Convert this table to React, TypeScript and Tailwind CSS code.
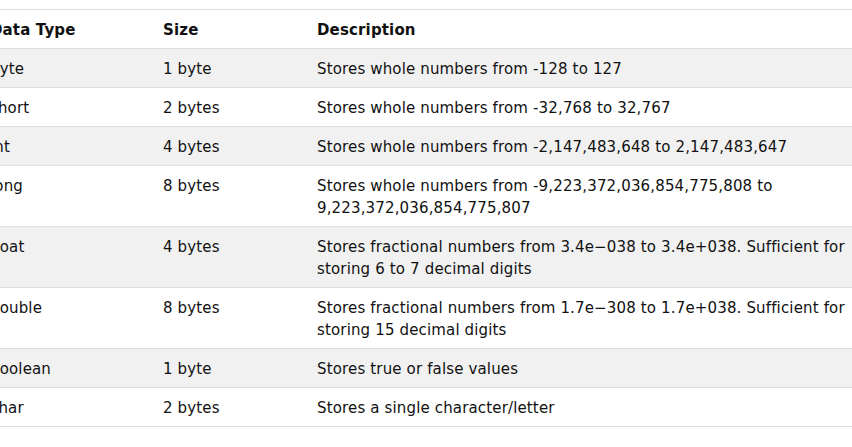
import React from "react";

// Data type rows, straight from the reference
const rows: { type: string; size: string; desc: string }[] = [
  { type: "byte", size: "1 byte", desc: "Stores whole numbers from -128 to 127" },
  { type: "short", size: "2 bytes", desc: "Stores whole numbers from -32,768 to 32,767" },
  { type: "int", size: "4 bytes", desc: "Stores whole numbers from -2,147,483,648 to 2,147,483,647" },
  {
    type: "long",
    size: "8 bytes",
    desc: "Stores whole numbers from -9,223,372,036,854,775,808 to 9,223,372,036,854,775,807",
  },
  {
    type: "float",
    size: "4 bytes",
    desc: "Stores fractional numbers from 3.4e\u2212038 to 3.4e+038. Sufficient for storing 6 to 7 decimal digits",
  },
  {
    type: "double",
    size: "8 bytes",
    desc: "Stores fractional numbers from 1.7e\u2212308 to 1.7e+038. Sufficient for storing 15 decimal digits",
  },
  { type: "boolean", size: "1 byte", desc: "Stores true or false values" },
  { type: "char", size: "2 bytes", desc: "Stores a single character/letter" },
];

const App: React.FC = () => {
  return (
    <div className="w-[852px] h-[447px] overflow-hidden bg-white font-['Verdana','DejaVu_Sans',sans-serif] text-[15px] leading-[22px] tracking-[0.15px] text-[#111111]">
      <table className="mt-[9px] ml-[-18px] border-collapse table-fixed w-[900px]">
        <colgroup>
          <col className="w-[173px]" />
          <col className="w-[154px]" />
          <col className="w-[573px]" />
        </colgroup>
        <thead>
          <tr className="border-y border-[#dddddd]">
            <th className="px-2 pt-[9px] pb-[7px] text-left font-bold">Data Type</th>
            <th className="px-2 pt-[9px] pb-[7px] text-left font-bold">Size</th>
            <th className="px-2 pt-[9px] pb-[7px] text-left font-bold">Description</th>
          </tr>
        </thead>
        <tbody>
          {rows.map((r, i) => (
            <tr
              key={r.type}
              className={`border-b border-[#dddddd] ${i % 2 === 0 ? "bg-[#f1f1f1]" : "bg-white"}`}
            >
              <td className="px-2 pt-[9px] pb-[7px] align-top">{r.type}</td>
              <td className="px-2 pt-[9px] pb-[7px] align-top">{r.size}</td>
              <td className="pl-2 pr-[20px] pt-[9px] pb-[7px] align-top">{r.desc}</td>
            </tr>
          ))}
        </tbody>
      </table>
    </div>
  );
};

export default App;
